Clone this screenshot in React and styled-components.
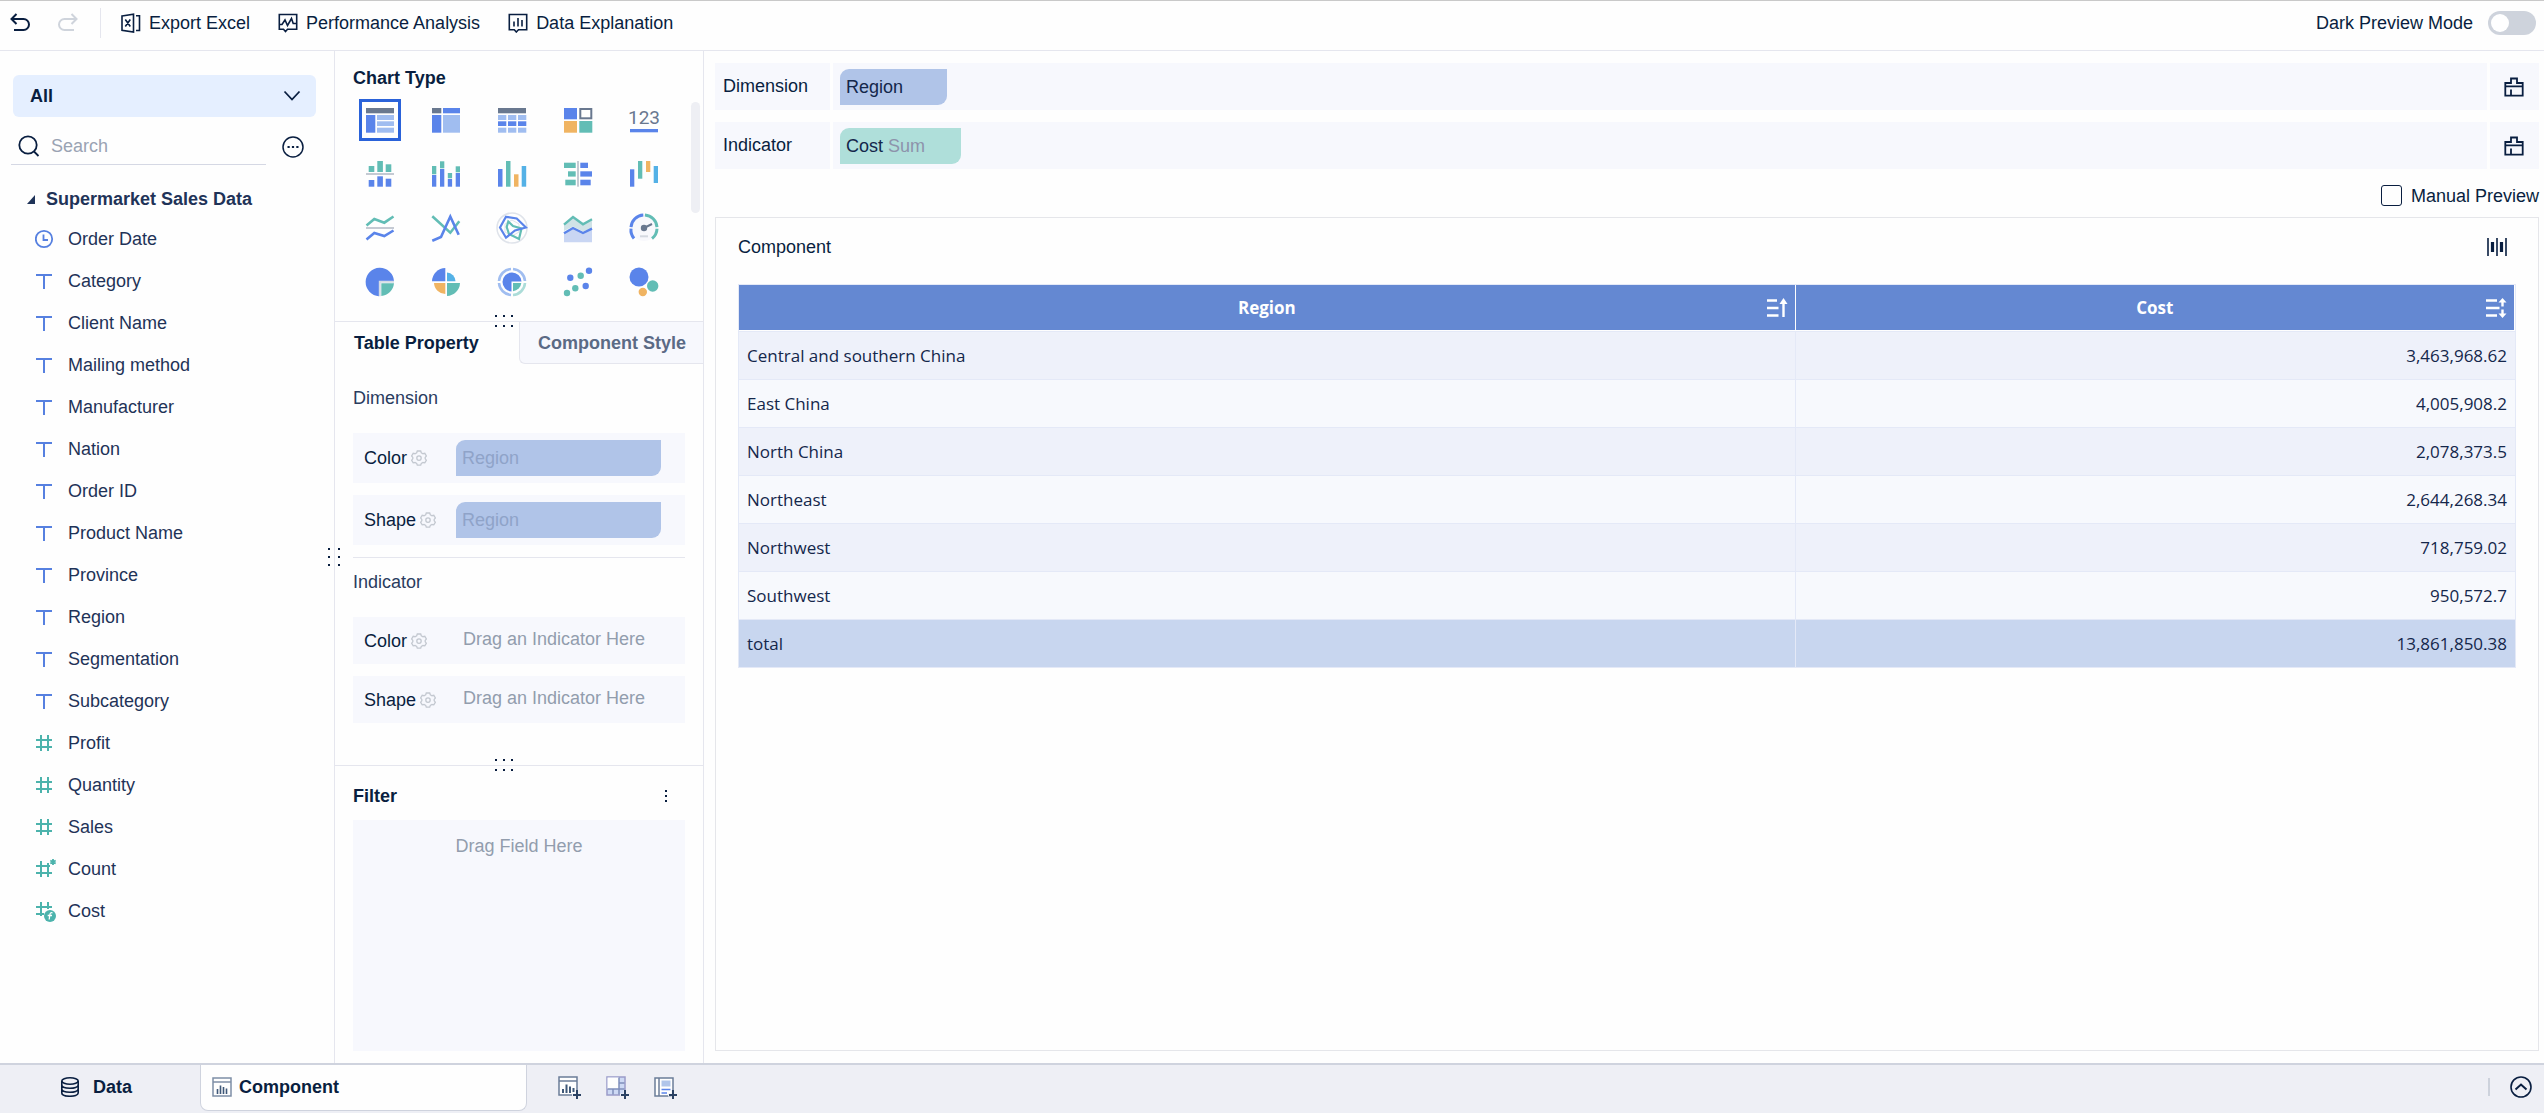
import React, { useState } from "react";
import styled, { createGlobalStyle } from "styled-components";

const BLUE = "#5a84ea";
const LIGHT = "#a0bdf0";
const TEAL = "#62bdb5";
const ORANGE = "#f0b462";
const SKY = "#54b1e6";
const GREY = "#69788f";
const LINE = "#c5cad3";

const dateFields = ["Order Date"];
const textFields = [
  "Category",
  "Client Name",
  "Mailing method",
  "Manufacturer",
  "Nation",
  "Order ID",
  "Product Name",
  "Province",
  "Region",
  "Segmentation",
  "Subcategory",
];
const fields = [
  ...dateFields.map((name) => ({ name, type: "date" })),
  ...textFields.map((name) => ({ name, type: "text" })),
  { name: "Profit", type: "number" },
  { name: "Quantity", type: "number" },
  { name: "Sales", type: "number" },
  { name: "Count", type: "count" },
  { name: "Cost", type: "formula" },
];

const rows = [
  ["Central and southern China", "3,463,968.62"],
  ["East China", "4,005,908.2"],
  ["North China", "2,078,373.5"],
  ["Northeast", "2,644,268.34"],
  ["Northwest", "718,759.02"],
  ["Southwest", "950,572.7"],
];

// [x, y, width, height, color]
const Rects = ({ list }) =>
  list.map(([x, y, w, h, c], i) => (
    <rect key={i} x={x} y={y} width={w} height={h} fill={c} />
  ));

const Dots = ({ list }) =>
  list.map(([x, y, r, c], i) => <circle key={i} cx={x} cy={y} r={r} fill={c} />);

const Stroke = ({ d, c, w = 2.6 }) => (
  <path d={d} fill="none" stroke={c} strokeWidth={w} />
);

const NumberText = styled.text`
  font-family: "Liberation Sans Narrow", Roboto, sans-serif;
  font-size: 19px;
  fill: ${GREY};
`;

const chartTypes = [
  {
    name: "Group table",
    icon: (
      <Rects
        list={[
          [2, 4, 28, 5.3, GREY],
          [2, 11, 9.3, 17.7, BLUE],
          [13, 11, 17, 5, LIGHT],
          [13, 17.3, 17, 4.7, LIGHT],
          [13, 23.7, 17, 5, LIGHT],
        ]}
      />
    ),
  },
  {
    name: "Cross table",
    icon: (
      <Rects
        list={[
          [2, 4, 9.3, 5.3, GREY],
          [13, 4, 17, 5.3, BLUE],
          [2, 11, 9.3, 17.7, BLUE],
          [13, 11, 17, 17.7, LIGHT],
        ]}
      />
    ),
  },
  {
    name: "Detail table",
    icon: (
      <Rects
        list={[
          [2, 4, 28, 5.3, GREY],
          ...[2, 12, 22].flatMap((x) => [
            [x, 11, 8.3, 5, LIGHT],
            [x, 17.3, 8.3, 4.7, BLUE],
            [x, 23.7, 8.3, 5, LIGHT],
          ]),
        ]}
      />
    ),
  },
  {
    name: "Color table",
    icon: (
      <>
        <Rects
          list={[
            [2, 4, 13, 11.3, BLUE],
            [2, 17, 13, 11.7, ORANGE],
            [17.3, 17, 13, 11.7, TEAL],
          ]}
        />
        <rect x="18.3" y="5" width="11" height="9.3" fill="none" stroke={GREY} strokeWidth="2" />
      </>
    ),
  },
  {
    name: "KPI card",
    icon: (
      <>
        <NumberText x="16" y="20" textAnchor="middle">
          123
        </NumberText>
        <rect x="2" y="25" width="28" height="3.3" fill={BLUE} />
      </>
    ),
  },
  {
    name: "Contrast column",
    icon: (
      <Rects
        list={[
          [4.7, 8, 5.6, 6, TEAL],
          [13.3, 3, 5.6, 11, TEAL],
          [21.7, 6.3, 5.6, 7.7, TEAL],
          [2, 15, 28, 2, LINE],
          [4.7, 22, 5.6, 6.7, BLUE],
          [13.3, 18.3, 5.6, 10.4, BLUE],
          [21.7, 20.7, 5.6, 8, BLUE],
        ]}
      />
    ),
  },
  {
    name: "Stacked column",
    icon: (
      <Rects
        list={[
          [2, 8, 4.3, 8.3, TEAL],
          [2, 17, 4.3, 11.7, BLUE],
          [10, 3.3, 4.3, 7, TEAL],
          [10, 11, 4.3, 17.7, BLUE],
          [17.8, 15, 4.3, 5.3, TEAL],
          [17.8, 21, 4.3, 7.7, BLUE],
          [25.7, 8.3, 4.3, 6, TEAL],
          [25.7, 15, 4.3, 13.7, BLUE],
        ]}
      />
    ),
  },
  {
    name: "Column",
    icon: (
      <Rects
        list={[
          [2, 11, 4.5, 17.7, BLUE],
          [10, 3, 4.5, 25.7, TEAL],
          [18, 16.3, 4.5, 12.4, ORANGE],
          [25.7, 8, 4.5, 20.7, SKY],
        ]}
      />
    ),
  },
  {
    name: "Contrast bar",
    icon: (
      <Rects
        list={[
          [2, 4.7, 11.7, 5.3, TEAL],
          [6, 13.3, 7.7, 5.3, TEAL],
          [3.3, 21.7, 10.4, 5.6, TEAL],
          [15, 3, 2, 25.7, LINE],
          [18.3, 4.7, 7.7, 5.3, BLUE],
          [18.3, 13.3, 11.7, 5.3, BLUE],
          [18.3, 21.7, 10.4, 5.6, BLUE],
        ]}
      />
    ),
  },
  {
    name: "Range column",
    icon: (
      <Rects
        list={[
          [2, 11.3, 4.3, 17.4, BLUE],
          [10, 3, 4.3, 17.7, TEAL],
          [18, 3, 4.3, 11, ORANGE],
          [25.7, 8, 4.3, 17, SKY],
        ]}
      />
    ),
  },
  {
    name: "Contrast line",
    icon: (
      <>
        <Stroke c={TEAL} d="M2.5 13.5 10.3 7 20.3 10.7 29.5 4.5" />
        <Stroke c={LINE} w="2" d="M2 16H30" />
        <Stroke c={BLUE} d="M2.5 27.5 10.3 21 20.3 24 29.5 18.5" />
      </>
    ),
  },
  {
    name: "Line",
    icon: (
      <>
        <Stroke c={TEAL} d="M2.3 4.3 20.3 20.7 29.3 9.3" />
        <Stroke c={BLUE} d="M2.3 28.7 11 25 20.3 4.5 28.7 22.7" />
      </>
    ),
  },
  {
    name: "Radar",
    icon: (
      <>
        <circle cx="16" cy="16" r="15" fill="none" stroke="#dfe3ea" strokeWidth="1.5" />
        <Stroke c="#dfe3ea" w="1" d="M16 8 23 12V20L16 24 9 20V12Z" />
        <Stroke c={TEAL} w="2.2" d="M12.3 9.5 17 14 25.5 16.5 23 27 13 22 10.7 15Z" />
        <Stroke c={BLUE} w="2.2" d="M10 4.8 20.7 6.5 30 15.5 19 18.5 10 25.7 4 15.5Z" />
      </>
    ),
  },
  {
    name: "Area",
    icon: (
      <>
        <path d="M2 12.7 11 5 21 12.3 30 7.3V16L21 19.5 11 14.5 2 19Z" fill="#d0e2e6" />
        <path d="M2 21.3 11 16 21 21 30 16.7V30.3H2Z" fill="#c9d6f3" />
        <Stroke c={TEAL} w="2.4" d="M2 12.7 11 5 21 12.3 30 7.3" />
        <Stroke c={BLUE} w="2.4" d="M2 21.3 11 16 21 21 30 16.7" />
      </>
    ),
  },
  {
    name: "Gauge",
    icon: (
      <>
        <circle cx="16" cy="16" r="13" fill="#f8f8fc" />
        <Stroke c={BLUE} w="3" d="M6 26.5A13 13 0 0 1 3 16.7M3 15.1A13 13 0 0 1 15.3 3" />
        <Stroke c={TEAL} w="3" d="M16.9 3A13 13 0 0 1 29 15.1M29 16.7A13 13 0 0 1 24 26.5" />
        <circle cx="16" cy="16" r="3.2" fill={GREY} />
        <Stroke c={GREY} w="2" d="M16 16 24 12" />
        <Stroke c="#d4d8e0" w="2" d="M12 24.3H20" />
      </>
    ),
  },
  {
    name: "Pie",
    icon: (
      <>
        <path d="M15 30.2A14.2 14.2 0 1 1 30 15H15Z" fill={BLUE} />
        <path d="M15.8 30.2V15.8H30" fill="none" stroke="#d4dbe6" strokeWidth="2" />
        <path d="M17.3 17.3H30A14 14 0 0 1 17.3 30Z" fill={TEAL} />
      </>
    ),
  },
  {
    name: "Rose",
    icon: (
      <>
        <path d="M15.3 15.3V2A13.5 13.5 0 0 0 2 15.3Z" fill={BLUE} />
        <path d="M17 15.3V6.5A9 9 0 0 1 25.5 15.3Z" fill={SKY} />
        <path d="M15.3 17V28A11.5 11.5 0 0 1 4 17Z" fill={ORANGE} />
        <path d="M17 17V30A13.5 13.5 0 0 0 30 17Z" fill={TEAL} />
      </>
    ),
  },
  {
    name: "Multilayer pie",
    icon: (
      <>
        <Stroke c={LIGHT} d="M15 29A13 13 0 0 1 3 17M3 15A13 13 0 0 1 15 3M17 3A13 13 0 0 1 29 15" />
        <Stroke c="#abdcd8" d="M29 17A13 13 0 0 1 17 29" />
        <path d="M15.5 25.5A9.5 9.5 0 1 1 25.5 15.5H15.5Z" fill={BLUE} />
        <path d="M17 17H25.3A9.3 9.3 0 0 1 17 25.3Z" fill={TEAL} />
      </>
    ),
  },
  {
    name: "Scatter",
    icon: (
      <Dots
        list={[
          [8.3, 11.7, 3.2, BLUE],
          [18.7, 9.7, 3.2, TEAL],
          [27, 4.7, 3.2, BLUE],
          [5, 27, 3.2, TEAL],
          [13.3, 22.3, 3.2, TEAL],
          [23.7, 20, 3.2, BLUE],
        ]}
      />
    ),
  },
  {
    name: "Bubble",
    icon: (
      <Dots
        list={[
          [11, 11, 9.5, BLUE],
          [24.7, 20, 5.7, TEAL],
          [14.8, 26, 4.2, ORANGE],
        ]}
      />
    ),
  },
];

const fieldIcons = {
  date: (
    <g stroke="#5680e0" strokeWidth="1.8">
      <circle cx="9" cy="10" r="8.2" />
      <path d="M8.5 5.5V11H13" />
    </g>
  ),
  text: <path d="M1 4H17M9 4V18" stroke="#5680e0" strokeWidth="2" />,
  number: (
    <path d="M6 2V18M13 2V18M1 7H17M1 14H17" stroke="#4cb3ac" strokeWidth="2" />
  ),
  count: (
    <>
      <path d="M6 2V18M13 4V18M1 7H15M1 14H17" stroke="#4cb3ac" strokeWidth="2" />
      <path d="M18 0V6M15.3 1.5 20.7 4.5M20.7 1.5 15.3 4.5" stroke="#4cb3ac" strokeWidth="1.8" />
    </>
  ),
  formula: (
    <>
      <path d="M6 1V15M13 1V8M1 6H17M1 13H9" stroke="#4cb3ac" strokeWidth="2" />
      <circle cx="15" cy="15" r="6" fill="#4cb3ac" />
      <path d="M17.5 11.8C15.5 11.3 15 12.5 14.8 14L14.2 18.5M12.7 14.5H17" stroke="#fff" strokeWidth="1.3" />
    </>
  ),
};

const Svg = ({ w = 20, h = w, children, ...rest }) => (
  <Drawing width={w} height={h} viewBox={`0 0 ${w} ${h}`} fill="none" aria-hidden="true" {...rest}>
    {children}
  </Drawing>
);

const UndoIcon = () => (
  <Svg stroke="currentColor" strokeWidth="2">
    <path d="M6.5 1 1.5 6 6.5 11M2 6H13.5A5.5 5.5 0 0 1 13.5 17H4" />
  </Svg>
);

const RedoIcon = () => (
  <Svg stroke="currentColor" strokeWidth="2">
    <path d="M13.5 1 18.5 6 13.5 11M18 6H6.5A5.5 5.5 0 0 0 6.5 17H16" />
  </Svg>
);

const ExcelIcon = () => (
  <Svg stroke="currentColor" strokeWidth="1.6">
    <path d="M1 3 12.5 1.2V19L1 17.2ZM15 2.8H18.5V17.5H15M4.3 6.5 9.3 13.5M9.3 6.5 4.3 13.5" />
  </Svg>
);

const AnalysisIcon = () => (
  <Svg stroke="currentColor" strokeWidth="1.6">
    <path d="M1.3 1.5H18.7V16.3H9.5L7.5 18.5 5.5 16.3H1.3ZM1.5 11.5H4L7 7 9.5 12.5 13.5 5.5 15.2 10.5H18.5" />
  </Svg>
);

const ExplainIcon = () => (
  <Svg stroke="currentColor" strokeWidth="1.6">
    <path d="M1.3 1.5H18.7V16.8H10.5L8.3 19 6.3 16.8H1.3ZM6 8.5V13.5M10 5V13.5M14 7V13.5" />
  </Svg>
);

const GearIcon = () => (
  <Svg w={16} stroke="#c3c8d0" strokeWidth="1.3">
    <path d="M6.3 1H9.7L10.3 2.8 12 3.7 13.8 3.3 15.4 6 14.2 7.4V8.8L15.4 10.2 13.8 12.8 12 12.5 10.3 13.4 9.7 15.2H6.3L5.7 13.4 4 12.5 2.2 12.8.6 10.2 1.8 8.8V7.4L.6 6 2.2 3.3 4 3.7 5.7 2.8Z" />
    <circle cx="8" cy="8.1" r="2.2" />
  </Svg>
);

const BrushIcon = () => (
  <Svg stroke="currentColor" strokeWidth="1.8">
    <path d="M1.3 6H7V1.5H13V6H18.7V18.7H1.3ZM1.3 9.3H18.7M7 12.5V18.5" />
  </Svg>
);

const BarsIcon = () => (
  <Svg stroke="currentColor" strokeWidth="1.6">
    <path d="M1 1V19M10 1V19M19 1V19" />
    <path d="M5.5 5V15M14.5 5V15" strokeWidth="3.2" />
  </Svg>
);

const SortAscIcon = () => (
  <Svg w={22} stroke="currentColor" strokeWidth="2.4">
    <path d="M1 3.5H11M1 11H12.5M1 18.5H12.5M17.5 20V5" />
    <path d="M17.5 1 21.5 7H13.5Z" fill="currentColor" stroke="none" />
  </Svg>
);

const SortIcon = () => (
  <Svg w={22} stroke="currentColor" strokeWidth="2.4">
    <path d="M1 3.5H12M1 11H14.5M1 18.5H12M17.5 9.5V4M17.5 12.5V18" />
    <path d="M17.5 1 21.5 5.5H13.5ZM17.5 21 21.5 16.5H13.5Z" fill="currentColor" stroke="none" />
  </Svg>
);

const DatabaseIcon = () => (
  <Svg stroke="currentColor" strokeWidth="1.6">
    <ellipse cx="10" cy="4" rx="8.2" ry="3.2" />
    <path d="M1.8 4V16C1.8 20.3 18.2 20.3 18.2 16V4M1.8 8C1.8 12.3 18.2 12.3 18.2 8M1.8 12C1.8 16.3 18.2 16.3 18.2 12" />
  </Svg>
);

const ComponentIcon = () => (
  <Svg stroke="#7e8ea6" strokeWidth="1.5">
    <rect x="1" y="1" width="18" height="18" fill="#fefefe" />
    <path d="M1 5H19" />
    <path d="M5.5 12V17M8.5 8.5V17M11.5 10V17M14.5 11.5V17" stroke="#3f5878" strokeWidth="1.6" />
  </Svg>
);

const Plus = () => (
  <>
    <path d="M19 14V24M14 19H24" stroke="#eeeff5" strokeWidth="3" />
    <path d="M19 14V23M15 19H23" stroke="#2b4263" strokeWidth="2" />
  </>
);

const AddComponentIcon = () => (
  <Svg w={24} stroke="#6b7d98" strokeWidth="1.5">
    <rect x="1" y="1" width="18" height="18" fill="#fefefe" />
    <path d="M1 5H19" />
    <path d="M5 13V17M8.5 8.5V17M12 10.5V17M15.5 12V16" stroke="#3f5878" strokeWidth="2" />
    <Plus />
  </Svg>
);

const AddDashboardIcon = () => (
  <Svg w={24} stroke="#7f8ebb" strokeWidth="1.5">
    <rect x="1" y="1" width="18" height="18" fill="#cdd9f4" stroke="#9b9cc9" />
    <rect x="1.5" y="1.5" width="11.5" height="11.5" fill="#fefefe" stroke="none" />
    <path d="M13 1.5V18.5M1.5 13H18.5M13 7H18.5M7 13V18.5" />
    <Plus />
  </Svg>
);

const AddReportIcon = () => (
  <Svg w={24} stroke="#6b7d98" strokeWidth="1.5">
    <rect x="1" y="2" width="18" height="18" fill="#fefefe" />
    <path d="M5 2V20" />
    <rect x="7.5" y="4.5" width="9" height="6" fill="#b0c5ea" stroke="none" />
    <path d="M7.5 13.5H16.5M7.5 17H13" stroke={BLUE} />
    <Plus />
  </Svg>
);

const Header = () => {
  const [dark, setDark] = useState(false);
  return (
    <TopBar>
      <History>
        <IconButton aria-label="Undo">
          <UndoIcon />
        </IconButton>
        <IconButton aria-label="Redo" disabled>
          <RedoIcon />
        </IconButton>
      </History>
      <Actions>
        <TextButton>
          <ExcelIcon />
          Export Excel
        </TextButton>
        <TextButton>
          <AnalysisIcon />
          Performance Analysis
        </TextButton>
        <TextButton>
          <ExplainIcon />
          Data Explanation
        </TextButton>
      </Actions>
      <SwitchLabel>
        Dark Preview Mode
        <Switch
          type="checkbox"
          role="switch"
          checked={dark}
          onChange={(e) => setDark(e.target.checked)}
        />
      </SwitchLabel>
    </TopBar>
  );
};

const Fields = () => (
  <FieldPanel>
    <SelectBox>
      <Select aria-label="Data set" defaultValue="All">
        <option value="All">All</option>
      </Select>
      <Chevron w={18} h={12} stroke="#091e40" strokeWidth="1.8">
        <path d="M1.5 1.5 9 9.5 16.5 1.5" />
      </Chevron>
    </SelectBox>
    <SearchRow>
      <SearchLabel>
        <Svg w={22} stroke="#091e40" strokeWidth="1.8">
          <circle cx="10" cy="10" r="8.7" />
          <path d="M16 16.5 20.5 21" />
        </Svg>
        <SearchInput type="search" placeholder="Search" aria-label="Search" />
      </SearchLabel>
      <IconButton aria-label="More">
        <Svg w={22} stroke="#091e40" strokeWidth="1.5">
          <circle cx="11" cy="11" r="10" />
          <path d="M5.5 11H7.7M9.9 11H12.1M14.3 11H16.5" strokeWidth="2.2" />
        </Svg>
      </IconButton>
    </SearchRow>
    <GroupTitle>
      <Svg w={8} h={9}>
        <path d="M8 0V9H0Z" fill="#1f3358" />
      </Svg>
      Supermarket Sales Data
    </GroupTitle>
    <FieldList>
      {fields.map((f) => (
        <Field key={f.name}>
          <Svg w={22} h={21}>
            {fieldIcons[f.type]}
          </Svg>
          {f.name}
        </Field>
      ))}
    </FieldList>
    <SideGrip w={14} h={22} fill="#091e40">
      <path d="M1 2H3V4H1ZM1 10H3V12H1ZM1 18H3V20H1ZM11 2H13V4H11ZM11 10H13V12H11ZM11 18H13V20H11Z" />
    </SideGrip>
  </FieldPanel>
);

const Grip = () => (
  <RowGrip w={20} h={14} fill="#091e40">
    <path d="M1 1H3V3H1ZM9 1H11V3H9ZM17 1H19V3H17ZM1 11H3V13H1ZM9 11H11V13H9ZM17 11H19V13H17Z" />
  </RowGrip>
);

const Property = ({ name, value }) => (
  <PropertyRow $filled={!!value}>
    <PropertyName>
      {name}
      <IconButton aria-label={`${name} settings`}>
        <GearIcon />
      </IconButton>
    </PropertyName>
    {value ? <Pill $muted>{value}</Pill> : <Hint>Drag an Indicator Here</Hint>}
  </PropertyRow>
);

const Settings = () => {
  const [chart, setChart] = useState("Group table");
  return (
    <SettingsPanel>
      <ChartSection>
        <Title>Chart Type</Title>
        <ChartArea>
          <ChartGrid>
            {chartTypes.map((c) => (
              <ChartButton
                key={c.name}
                aria-label={c.name}
                $active={chart === c.name}
                onClick={() => setChart(c.name)}
              >
                <Svg w={32}>{c.icon}</Svg>
              </ChartButton>
            ))}
          </ChartGrid>
          <ScrollThumb />
        </ChartArea>
      </ChartSection>
      <PropertySection>
        <Grip />
        <Tabs role="tablist">
          <Tab role="tab" aria-selected="true" $active>
            Table Property
          </Tab>
          <Tab role="tab" aria-selected="false">
            Component Style
          </Tab>
        </Tabs>
        <PropertyGroup>
          <GroupName>Dimension</GroupName>
          <Property name="Color" value="Region" />
          <Property name="Shape" value="Region" />
        </PropertyGroup>
        <PropertyGroup $line>
          <GroupName>Indicator</GroupName>
          <Property name="Color" />
          <Property name="Shape" />
        </PropertyGroup>
      </PropertySection>
      <FilterSection>
        <Grip />
        <FilterHead>
          <Title>Filter</Title>
          <IconButton aria-label="Filter menu">
            <Svg w={4} h={14} fill="#091e40">
              <path d="M1 1H3V3H1ZM1 6H3V8H1ZM1 11H3V13H1Z" />
            </Svg>
          </IconButton>
        </FilterHead>
        <DropZone>Drag Field Here</DropZone>
      </FilterSection>
    </SettingsPanel>
  );
};

const Shelf = ({ name, children }) => (
  <ShelfRow>
    <ShelfName>{name}</ShelfName>
    <ShelfBody>{children}</ShelfBody>
    <ShelfButton aria-label={`Clear ${name}`}>
      <BrushIcon />
    </ShelfButton>
  </ShelfRow>
);

const Preview = () => (
  <Main>
    <Shelves>
      <Shelf name="Dimension">
        <Pill>Region</Pill>
      </Shelf>
      <Shelf name="Indicator">
        <Pill $green>
          Cost <Muted>Sum</Muted>
        </Pill>
      </Shelf>
    </Shelves>
    <PreviewOption>
      <CheckBox type="checkbox" />
      Manual Preview
    </PreviewOption>
    <Card>
      <CardHead>
        Component
        <IconButton aria-label="Column width">
          <BarsIcon />
        </IconButton>
      </CardHead>
      <Table>
        <thead>
          <tr>
            <Th $wide>
              <HeadCell>
                <span>Region</span>
                <IconButton aria-label="Sort Region">
                  <SortAscIcon />
                </IconButton>
              </HeadCell>
            </Th>
            <Th>
              <HeadCell>
                <span>Cost</span>
                <IconButton aria-label="Sort Cost">
                  <SortIcon />
                </IconButton>
              </HeadCell>
            </Th>
          </tr>
        </thead>
        <tbody>
          {rows.map(([region, cost]) => (
            <Row key={region}>
              <Td>{region}</Td>
              <Td $num>{cost}</Td>
            </Row>
          ))}
        </tbody>
        <tfoot>
          <TotalRow>
            <Td>total</Td>
            <Td $num>13,861,850.38</Td>
          </TotalRow>
        </tfoot>
      </Table>
    </Card>
  </Main>
);

const Footer = () => (
  <BottomBar>
    <DataTab>
      <DatabaseIcon />
      Data
    </DataTab>
    <ComponentTab>
      <ComponentIcon />
      Component
    </ComponentTab>
    <AddButtons>
      <IconButton aria-label="Add component">
        <AddComponentIcon />
      </IconButton>
      <IconButton aria-label="Add dashboard">
        <AddDashboardIcon />
      </IconButton>
      <IconButton aria-label="Add report">
        <AddReportIcon />
      </IconButton>
    </AddButtons>
    <Collapse>
      <IconButton aria-label="Expand">
        <Svg w={22} stroke="#091e40" strokeWidth="1.6">
          <circle cx="11" cy="11" r="10" />
          <path d="M5.5 13.5 11 8.5 16.5 13.5" strokeWidth="2" />
        </Svg>
      </IconButton>
    </Collapse>
  </BottomBar>
);

const App = () => (
  <Page>
    <GlobalStyle />
    <Header />
    <Content>
      <Fields />
      <Settings />
      <Preview />
    </Content>
    <Footer />
  </Page>
);

export default App;

const GlobalStyle = createGlobalStyle`
  * {
    box-sizing: border-box;
  }
  body {
    margin: 0;
    background-color: #fefefe;
    color: #091e40;
    font-family: "Liberation Sans", Arial, sans-serif;
    font-size: 18px;
    line-height: 24px;
  }
  button, input, select {
    font: inherit;
    color: inherit;
  }
  button {
    padding: 0;
    border: none;
    background: none;
    cursor: pointer;
  }
`;

const Drawing = styled.svg`
  display: block;
  flex: none;
`;

const Page = styled.div`
  min-height: 100vh;
  display: flex;
  flex-direction: column;
`;

const Content = styled.div`
  flex: 1;
  display: flex;
`;

const IconButton = styled.button`
  display: flex;
  align-items: center;
  &:disabled {
    color: #cfd4dc;
    cursor: default;
  }
`;

const TopBar = styled.header`
  height: 51px;
  display: flex;
  align-items: center;
  padding: 0 8px 5px 10px;
  border-top: 1px solid #c9c9c9;
  border-bottom: 1px solid #e5e6ee;
`;

const History = styled.div`
  height: 30px;
  display: flex;
  align-items: center;
  gap: 28px;
  padding-right: 22px;
  border-right: 1px solid #e5e6ee;
`;

const Actions = styled.div`
  flex: 1;
  display: flex;
  gap: 28px;
  padding-left: 20px;
`;

const TextButton = styled.button`
  display: flex;
  align-items: center;
  gap: 8px;
`;

const SwitchLabel = styled.label`
  display: flex;
  align-items: center;
  gap: 15px;
`;

const Switch = styled.input`
  appearance: none;
  width: 48px;
  height: 24px;
  margin: 0;
  padding: 3px;
  display: flex;
  border-radius: 12px;
  background-color: #ced3dc;
  cursor: pointer;
  &::before {
    content: "";
    width: 18px;
    height: 18px;
    border-radius: 50%;
    background-color: #fff;
  }
  &:checked {
    justify-content: flex-end;
    background-color: #2a62d9;
  }
`;

const FieldPanel = styled.aside`
  position: relative;
  width: 335px;
  flex: none;
  padding-top: 24px;
  border-right: 1px solid #e5e6ee;
  color: #1f3358;
`;

const SelectBox = styled.div`
  position: relative;
  margin: 0 18px 0 13px;
`;

const Select = styled.select`
  appearance: none;
  width: 100%;
  height: 42px;
  padding: 0 17px;
  border: none;
  border-radius: 6px;
  outline: none;
  background-color: #e5efff;
  color: #091e40;
  font-weight: bold;
`;

const Chevron = styled(Svg)`
  position: absolute;
  right: 15px;
  top: 15px;
  pointer-events: none;
`;

const SearchRow = styled.div`
  display: flex;
  align-items: center;
  gap: 16px;
  padding: 11px 30px 0 11px;
`;

const SearchLabel = styled.label`
  flex: 1;
  height: 37px;
  display: flex;
  align-items: center;
  gap: 11px;
  padding-left: 7px;
  border-bottom: 1px solid #d5d8e4;
`;

const SearchInput = styled.input`
  width: 100%;
  min-width: 0;
  padding: 0;
  border: none;
  outline: none;
  background: none;
  &::placeholder {
    color: #9aa3b3;
  }
`;

const GroupTitle = styled.div`
  height: 40px;
  display: flex;
  align-items: center;
  gap: 11px;
  margin-top: 13px;
  padding: 2px 0 0 27px;
  font-weight: bold;
`;

const FieldList = styled.ul`
  margin: 0;
  padding: 0;
  list-style: none;
`;

const Field = styled.li`
  height: 42px;
  display: flex;
  align-items: center;
  gap: 11px;
  padding-left: 35px;
  cursor: grab;
`;

const SideGrip = styled(Svg)`
  position: absolute;
  right: -7px;
  top: calc(50% - 11px);
`;

const RowGrip = styled(Svg)`
  position: absolute;
  left: 159px;
  top: -8px;
`;

const SettingsPanel = styled.section`
  width: 369px;
  flex: none;
  display: flex;
  flex-direction: column;
  border-right: 1px solid #e5e6ee;
`;

const Title = styled.h2`
  margin: 0;
  font-size: 18px;
  line-height: 24px;
`;

const ChartSection = styled.div`
  height: 270px;
  padding: 15px 3px 0 18px;
`;

const ChartArea = styled.div`
  display: flex;
  justify-content: space-between;
  padding: 9px 0 0 6px;
`;

const ChartGrid = styled.div`
  display: grid;
  grid-template-columns: repeat(5, 42px);
  column-gap: 24px;
  row-gap: 12px;
`;

const ChartButton = styled.button`
  width: 42px;
  height: 42px;
  display: flex;
  align-items: center;
  justify-content: center;
  border: 3px solid ${(p) => (p.$active ? "#2a62d9" : "transparent")};
`;

const ScrollThumb = styled.div`
  width: 9px;
  height: 111px;
  margin-top: 3px;
  border-radius: 5px;
  background-color: #eeeff4;
`;

const PropertySection = styled.div`
  position: relative;
  height: 444px;
  border-top: 1px solid #e5e6ee;
`;

const Tabs = styled.div`
  display: flex;
`;

const Tab = styled.button`
  flex: 1;
  height: 42px;
  padding-left: 18px;
  border-style: solid;
  border-color: ${(p) => (p.$active ? "transparent" : "#e5e6ee")};
  border-width: 0 0 1px 1px;
  border-radius: 0 0 0 6px;
  background-color: ${(p) => (p.$active ? "transparent" : "#f7f8fd")};
  color: ${(p) => (p.$active ? "#091e40" : "#5b6a85")};
  font-weight: bold;
  text-align: left;
`;

const PropertyGroup = styled.div`
  display: flex;
  flex-direction: column;
  gap: 12px;
  margin: ${(p) => (p.$line ? "12px" : "0")} 18px 0;
  padding-top: ${(p) => (p.$line ? "12px" : "22px")};
  border-top: ${(p) => (p.$line ? "1px solid #e5e6ee" : "none")};
`;

const GroupName = styled.div`
  padding-bottom: 11px;
  color: #2a3c5e;
`;

const PropertyRow = styled.div`
  height: ${(p) => (p.$filled ? "50px" : "47px")};
  display: grid;
  grid-template-columns: 92px 1fr;
  align-items: center;
  padding: 0 24px 0 11px;
  background-color: #f7f8fd;
`;

const PropertyName = styled.div`
  display: flex;
  align-items: center;
  gap: 4px;
`;

const Pill = styled.div`
  height: 36px;
  padding: 6px ${(p) => (p.$green ? "36px" : "44px")} 6px 6px;
  border-radius: 9px 0;
  background-color: ${(p) => (p.$green ? "#afdfda" : "#b0c4e8")};
  color: ${(p) => (p.$muted ? "#8fa3c8" : "#14274b")};
`;

const Muted = styled.span`
  color: #8d93ab;
`;

const Hint = styled.div`
  padding: 0 0 3px 7px;
  color: #929dad;
`;

const FilterSection = styled.div`
  position: relative;
  flex: 1;
  display: flex;
  flex-direction: column;
  padding: 18px 18px 12px;
  border-top: 1px solid #e5e6ee;
`;

const FilterHead = styled.div`
  display: flex;
  align-items: center;
  justify-content: space-between;
  padding-right: 17px;
`;

const DropZone = styled.div`
  flex: 1;
  margin-top: 12px;
  padding-top: 14px;
  background-color: #f7f8fd;
  color: #929dad;
  text-align: center;
`;

const Main = styled.main`
  flex: 1;
  display: flex;
  flex-direction: column;
  padding: 12px 5px 12px 11px;
`;

const Shelves = styled.div`
  display: grid;
  gap: 12px;
`;

const ShelfRow = styled.div`
  height: 47px;
  display: grid;
  grid-template-columns: 115px 1fr 49px;
  gap: 3px;
`;

const ShelfName = styled.div`
  display: flex;
  align-items: center;
  padding: 0 0 2px 8px;
  background-color: #f7f8fd;
`;

const ShelfBody = styled.div`
  display: flex;
  align-items: center;
  padding-left: 7px;
  background-color: #f7f8fd;
`;

const ShelfButton = styled.button`
  display: flex;
  align-items: center;
  justify-content: center;
  padding-right: 2px;
  background-color: #f7f8fd;
`;

const PreviewOption = styled.label`
  height: 48px;
  display: flex;
  align-items: center;
  justify-content: flex-end;
  gap: 9px;
  padding-top: 5px;
`;

const CheckBox = styled.input`
  appearance: none;
  width: 21px;
  height: 21px;
  margin: 0;
  border: 1px solid #091e40;
  border-radius: 3px;
  &:checked {
    background-color: #2a62d9;
  }
`;

const Card = styled.section`
  flex: 1;
  padding: 17px 22px 24px;
  border: 1px solid #e5e6ea;
`;

const CardHead = styled.div`
  display: flex;
  align-items: center;
  justify-content: space-between;
  padding: 0 9px 25px 0;
`;

const Table = styled.table`
  width: 100%;
  border: 1px solid #e4e9f7;
  border-collapse: separate;
  border-spacing: 0;
  color: #14274b;
  font-family: "Open Sans", "Noto Sans", sans-serif;
  font-size: 17px;
`;

const Th = styled.th`
  width: ${(p) => (p.$wide ? "59.5%" : "auto")};
  height: 46px;
  padding: 0;
  border-right: 1px solid #fefefe;
  border-bottom: 1px solid #fefefe;
  background-color: #6488d2;
  color: #fff;
`;

const HeadCell = styled.div`
  display: grid;
  grid-template-columns: 1fr 22px;
  align-items: center;
  padding: 0 7px 0 29px;
`;

const Td = styled.td`
  height: 48px;
  padding: 0 8px;
  border-top: 1px solid #e4e9f7;
  border-right: 1px solid #e4e9f7;
  text-align: ${(p) => (p.$num ? "right" : "left")};
  &:last-child {
    border-right: none;
  }
`;

const Row = styled.tr`
  background-color: #f7f9fd;
  &:nth-child(odd) {
    background-color: #eef1fa;
  }
`;

const TotalRow = styled.tr`
  background-color: #c8d6ef;
`;

const BottomBar = styled.footer`
  height: 50px;
  display: flex;
  border-top: 2px solid #cfd3de;
  background-color: #eeeff5;
`;

const DataTab = styled.button`
  width: 200px;
  display: flex;
  align-items: center;
  gap: 13px;
  padding: 0 0 4px 60px;
  font-weight: bold;
`;

const ComponentTab = styled.button`
  width: 327px;
  height: 46px;
  display: flex;
  align-items: center;
  gap: 7px;
  padding: 0 0 2px 11px;
  border: 1px solid #cfd3de;
  border-top: none;
  border-radius: 0 0 8px 8px;
  background-color: #fefefe;
  font-weight: bold;
`;

const AddButtons = styled.div`
  flex: 1;
  display: flex;
  align-items: center;
  gap: 24px;
  padding: 0 0 2px 31px;
`;

const Collapse = styled.div`
  height: 18px;
  display: flex;
  align-items: center;
  align-self: center;
  margin-bottom: 4px;
  padding: 0 12px 0 20px;
  border-left: 2px solid #cdd2dc;
`;
